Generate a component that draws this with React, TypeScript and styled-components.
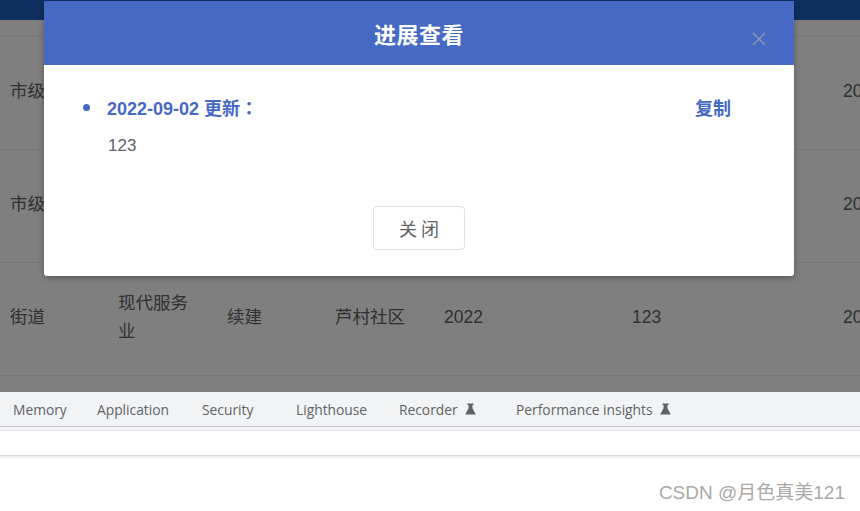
import styled, { createGlobalStyle } from 'styled-components';
import type { FC } from 'react';

const GlobalStyle = createGlobalStyle`
  html, body {
    margin: 0;
    padding: 0;
    background: #ffffff;
  }
  body {
    font-family: "Liberation Sans", "Noto Sans CJK SC", sans-serif;
  }
`;

const Screen = styled.div`
  width: 860px;
  height: 511px;
  display: flex;
  flex-direction: column;
  overflow: hidden;
`;

const Viewport = styled.div`
  position: relative;
  height: 392px;
  flex: none;
  overflow: hidden;
  background: #ffffff;
`;

const TopBar = styled.div`
  height: 20px;
  background: #1f5fc0;
`;

const HeadStub = styled.div`
  height: 16px;
  border-bottom: 1px solid #ebeef5;
`;

const Row = styled.div`
  display: flex;
  align-items: center;
  box-sizing: border-box;
  height: 113px;
  padding-bottom: 4px;
  width: 1100px;
  border-bottom: 1px solid #ebeef5;
`;

const Cell = styled.div<{ $w: number }>`
  width: ${(p) => p.$w}px;
  flex: none;
  box-sizing: border-box;
  padding: 0 10px;
  font-size: 17.5px;
  line-height: 28px;
  color: #606266;
`;

const WrapText = styled.span`
  display: block;
  max-width: 75px;
`;

const Overlay = styled.div`
  position: absolute;
  inset: 0;
  background: rgba(0, 0, 0, 0.5);
`;

const Modal = styled.div`
  position: absolute;
  top: 1px;
  left: 44px;
  width: 750px;
  background: #ffffff;
  border-radius: 0 0 3px 3px;
  box-shadow: 0 2px 6px rgba(0, 0, 0, 0.3);
  display: flex;
  flex-direction: column;
`;

const ModalHeader = styled.div`
  position: relative;
  height: 64px;
  background: #4669c4;
  display: flex;
  align-items: center;
  justify-content: center;
`;

const Title = styled.div`
  color: #ffffff;
  font-size: 22px;
  font-weight: bold;
  letter-spacing: 0.5px;
`;

const CloseIcon = styled.button`
  position: absolute;
  right: 28px;
  top: 31px;
  width: 14px;
  height: 14px;
  padding: 0;
  border: none;
  background: transparent;
  display: flex;
`;

const ModalBody = styled.div`
  padding: 30px 63px 0 39px;
`;

const EntryHead = styled.div`
  display: flex;
  align-items: center;
  height: 24px;
`;

const Dot = styled.span`
  width: 7px;
  height: 7px;
  border-radius: 50%;
  background: #4669c4;
  margin-right: 17px;
  flex: none;
`;

const EntryTitle = styled.span`
  flex: 1;
  color: #4669c4;
  font-size: 18px;
  font-weight: bold;
`;

const Colon = styled.span`
  font-family: "Noto Sans CJK TC", sans-serif;
`;

const CopyLink = styled.span`
  color: #4669c4;
  font-size: 18px;
  font-weight: bold;
  cursor: pointer;
`;

const EntryText = styled.div`
  margin: 15px 0 0 25px;
  height: 24px;
  line-height: 24px;
  font-size: 17px;
  color: #606266;
`;

const ModalFooter = styled.div`
  display: flex;
  justify-content: center;
  padding: 48px 0 26px;
`;

const CloseButton = styled.button`
  width: 92px;
  height: 44px;
  border: 1px solid #dcdfe6;
  border-radius: 4px;
  background: #ffffff;
  color: #606266;
  font-family: "Liberation Sans", "Noto Sans CJK SC", sans-serif;
  font-size: 18px;
  letter-spacing: 4px;
  padding: 0 0 0 4px;
`;

const DevBar = styled.div`
  height: 34px;
  background: #f1f3f4;
  border-bottom: 1px solid #cbcdd1;
  display: flex;
  align-items: center;
`;

const Tab = styled.div<{ $w: number; $pl?: number }>`
  width: ${(p) => p.$w}px;
  flex: none;
  box-sizing: border-box;
  padding-left: ${(p) => p.$pl ?? 15}px;
  display: flex;
  align-items: center;
  gap: 7px;
  font-family: "Open Sans", "Noto Sans", sans-serif;
  font-size: 13.8px;
  color: #5f6368;
`;

const DevGap = styled.div`
  height: 3px;
  background: #f1f3f4;
`;

const DevStrip = styled.div`
  height: 24px;
  background: #ffffff;
  border-top: 1px solid #e3e5e8;
  border-bottom: 1px solid #d5d7da;
`;

const DevStripEdge = styled.div`
  height: 2px;
  background: #eceef0;
`;

const Footer = styled.div`
  flex: 1;
  display: flex;
  align-items: flex-end;
  justify-content: flex-end;
  padding: 0 15px 7px 0;
`;

const Watermark = styled.span`
  font-size: 19px;
  color: #a9a9a9;
`;

const Flask: FC = () => (
  <svg width="11" height="12" viewBox="0 0 11 12">
    <path d="M2.5 0.5h6v1.6h-1v3.2l3.3 6.2h-10.6l3.3-6.2v-3.2h-1z" fill="#5f6368" />
  </svg>
);

const cols = [108, 109, 108, 109, 188, 211, 200];

const rows: string[][] = [
  ['市级', '', '', '', '', '', '2022'],
  ['市级', '', '', '', '', '', '2022'],
  ['街道', '现代服务业', '续建', '芦村社区', '2022', '123', '2022'],
];

const tabs = [
  { label: 'Memory', w: 82, pl: 13 },
  { label: 'Application', w: 105 },
  { label: 'Security', w: 94 },
  { label: 'Lighthouse', w: 103 },
  { label: 'Recorder', w: 117, flask: true },
  { label: 'Performance insights', w: 200, flask: true },
];

export default function App() {
  return (
    <Screen>
      <GlobalStyle />
      <Viewport>
        <TopBar />
        <HeadStub />
        {rows.map((r, i) => (
          <Row key={i}>
            {r.map((c, j) => (
              <Cell key={j} $w={cols[j]}>
                {j === 1 && c ? <WrapText>{c}</WrapText> : c}
              </Cell>
            ))}
          </Row>
        ))}
        <Overlay />
        <Modal>
          <ModalHeader>
            <Title>进展查看</Title>
            <CloseIcon aria-label="close">
              <svg width="14" height="14" viewBox="0 0 14 14">
                <path d="M1 1L13 13M13 1L1 13" stroke="#9098a8" strokeWidth="1.3" />
              </svg>
            </CloseIcon>
          </ModalHeader>
          <ModalBody>
            <EntryHead>
              <Dot />
              <EntryTitle>
                2022-09-02 更新<Colon>：</Colon>
              </EntryTitle>
              <CopyLink>复制</CopyLink>
            </EntryHead>
            <EntryText>123</EntryText>
          </ModalBody>
          <ModalFooter>
            <CloseButton type="button">关闭</CloseButton>
          </ModalFooter>
        </Modal>
      </Viewport>
      <DevBar>
        {tabs.map((t) => (
          <Tab key={t.label} $w={t.w} $pl={t.pl}>
            {t.label}
            {t.flask && <Flask />}
          </Tab>
        ))}
      </DevBar>
      <DevGap />
      <DevStrip />
      <DevStripEdge />
      <Footer>
        <Watermark>CSDN @月色真美121</Watermark>
      </Footer>
    </Screen>
  );
}
